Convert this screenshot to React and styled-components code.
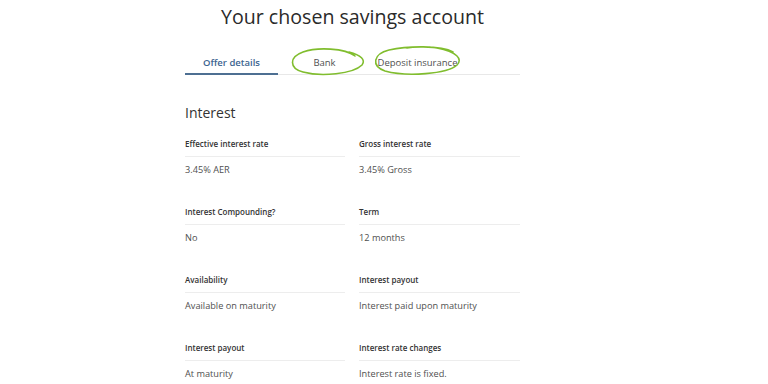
import React from "react";
import styled, { createGlobalStyle } from "styled-components";

const Global = createGlobalStyle`
    html, body {
        margin: 0;
        padding: 0;
        background: #ffffff;
        font-family: "Open Sans", "DejaVu Sans", sans-serif;
    }
`

const Page = styled.div`
    width: 768px;
    height: 384px;
    overflow: hidden;
    padding: 5px 0 0 185px;
    box-sizing: border-box;
`

const Panel = styled.div`
    width: 335px;
`

const Title = styled.h1`
    margin: 0;
    font-size: 19.6px;
    line-height: 24px;
    font-weight: 400;
    color: #2a2a2a;
    text-align: center;
`

const TabBar = styled.div`
    position: relative;
    display: flex;
    margin-top: 25px;
    border-bottom: 1px solid #e8e8e8;
`

const Tab = styled.div`
    width: 93px;
    height: 21px;
    line-height: 18px;
    text-align: center;
    font-size: 9.5px;
    font-weight: ${props => props.active ? 600 : 400};
    color: ${props => props.active ? "#3d6590" : "#505050"};
    border-bottom: 2px solid ${props => props.active ? "#4d6f92" : "transparent"};
    margin-bottom: -1px;
    box-sizing: border-box;
`

const Scribble = styled.svg`
    position: absolute;
    left: 0;
    top: -10px;
    width: 335px;
    height: 34px;
    pointer-events: none;
    overflow: visible;
`

const Heading = styled.h2`
    margin: 28px 0 0;
    font-size: 14px;
    line-height: 20px;
    font-weight: 400;
    color: #333;
`

const Grid = styled.div`
    display: grid;
    grid-template-columns: 160px 161px;
    column-gap: 14px;
    margin-top: 15px;
`

const Cell = styled.div`
    margin-bottom: 29px;
`

const Label = styled.div`
    font-size: 8px;
    line-height: 12px;
    font-weight: 600;
    color: #333;
    padding-bottom: 6px;
    border-bottom: 1px solid #ededed;
`

const Value = styled.div`
    margin-top: 6px;
    font-size: 9.2px;
    line-height: 14px;
    color: #505050;
`

const rows = [
    ["Effective interest rate", "3.45% AER"],
    ["Gross interest rate", "3.45% Gross"],
    ["Interest Compounding?", "No"],
    ["Term", "12 months"],
    ["Availability", "Available on maturity"],
    ["Interest payout", "Interest paid upon maturity"],
    ["Interest payout", "At maturity"],
    ["Interest rate changes", "Interest rate is fixed."],
]

const App = () => {
    return <Page>
        <Global />
        <Panel>
            <Title>Your chosen savings account</Title>
            <TabBar>
                <Tab active>Offer details</Tab>
                <Tab>Bank</Tab>
                <Tab>Deposit insurance</Tab>
                <Scribble viewBox="0 0 335 34">
                    {/* hand drawn marks round the two tabs */}
                    <path d="M170 12 C160 4 132 3 118 8 C104 13 104 24 118 28 C136 33 168 30 177 21 C181 16 176 11 164 8"
                        fill="none" stroke="#80bd2e" strokeWidth="1.6" strokeLinecap="round" />
                    <path d="M268 8 C256 1 222 2 204 6 C188 10 186 22 200 27 C222 33 262 30 272 21 C278 15 272 8 252 4 C240 2 228 3 222 4"
                        fill="none" stroke="#80bd2e" strokeWidth="1.6" strokeLinecap="round" />
                </Scribble>
            </TabBar>
            <Heading>Interest</Heading>
            <Grid>
                {rows.map(([label, value], i) => <Cell key={i}>
                    <Label>{label}</Label>
                    <Value>{value}</Value>
                </Cell>)}
            </Grid>
        </Panel>
    </Page>
}

export default App;
